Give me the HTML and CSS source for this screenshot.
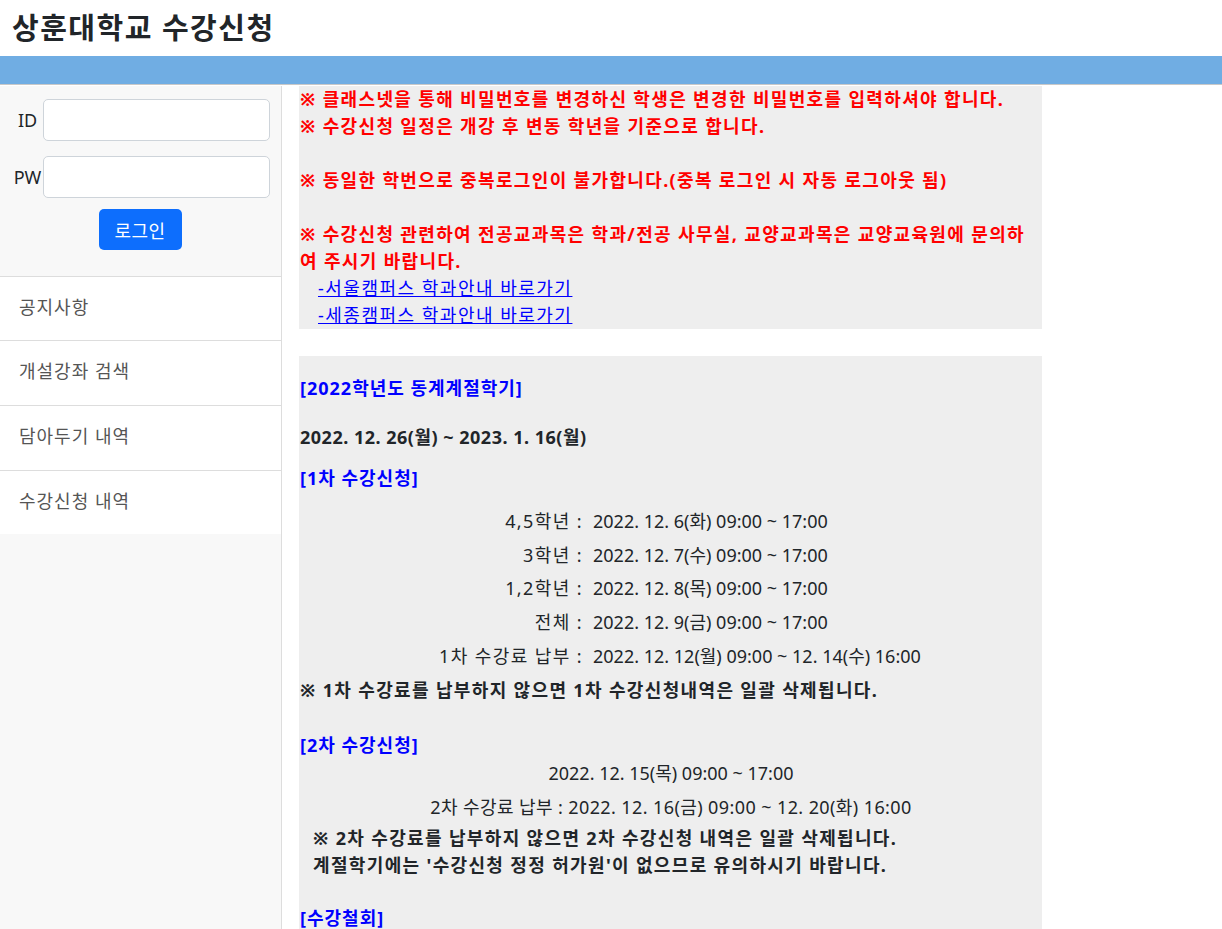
FILE: index.html
```html
<!DOCTYPE html>
<html lang="ko">
<head>
<meta charset="utf-8">
<title>상훈대학교 수강신청</title>
<link rel="stylesheet" href="styles.css">
</head>
<body>
<header class="top">
  <h1 class="title">상훈대학교 수강신청</h1>
</header>
<div class="bar"></div>
<div class="layout">
  <aside class="side">
    <form class="login">
      <div class="field"><label class="lbl" for="uid">ID</label><input class="inp" id="uid" type="text"></div>
      <div class="field"><label class="lbl" for="upw">PW</label><input class="inp" id="upw" type="password"></div>
      <button class="btn" type="button">로그인</button>
    </form>
    <nav class="menu">
      <a class="item" href="#">공지사항</a>
      <a class="item" href="#">개설강좌 검색</a>
      <a class="item" href="#">담아두기 내역</a>
      <a class="item" href="#">수강신청 내역</a>
    </nav>
  </aside>
  <main class="main">
    <section class="box notice">
      <div class="red">※ 클래스넷을 통해 비밀번호를 변경하신 학생은 변경한 비밀번호를 입력하셔야 합니다.</div>
      <div class="red">※ 수강신청 일정은 개강 후 변동 학년을 기준으로 합니다.</div>
      <div class="blank"></div>
      <div class="red">※ 동일한 학번으로 중복로그인이 불가합니다.(중복 로그인 시 자동 로그아웃 됨)</div>
      <div class="blank"></div>
      <div class="red">※ 수강신청 관련하여 전공교과목은 학과/전공 사무실, 교양교과목은 교양교육원에 문의하<br>여 주시기 바랍니다.</div>
      <a class="link" href="#">-서울캠퍼스 학과안내 바로가기</a>
      <a class="link" href="#">-세종캠퍼스 학과안내 바로가기</a>
    </section>
    <section class="box sched">
      <div class="head h-term">[2022학년도 동계계절학기]</div>
      <div class="strong period">2022. 12. 26(월) ~ 2023. 1. 16(월)</div>
      <div class="head h-first">[1차 수강신청]</div>
      <div class="table">
        <div class="k">4,5학년 :</div><div class="v">2022. 12. 6(화) 09:00 ~ 17:00</div>
        <div class="k">3학년 :</div><div class="v">2022. 12. 7(수) 09:00 ~ 17:00</div>
        <div class="k">1,2학년 :</div><div class="v">2022. 12. 8(목) 09:00 ~ 17:00</div>
        <div class="k">전체 :</div><div class="v">2022. 12. 9(금) 09:00 ~ 17:00</div>
        <div class="k">1차 수강료 납부 :</div><div class="v">2022. 12. 12(월) 09:00 ~ 12. 14(수) 16:00</div>
      </div>
      <div class="strong note warn1">※ 1차 수강료를 납부하지 않으면 1차 수강신청내역은 일괄 삭제됩니다.</div>
      <div class="head h-second">[2차 수강신청]</div>
      <div class="center c1">2022. 12. 15(목) 09:00 ~ 17:00</div>
      <div class="center c2">2차 수강료 납부 : 2022. 12. 16(금) 09:00 ~ 12. 20(화) 16:00</div>
      <div class="strong note indent warn2">※ 2차 수강료를 납부하지 않으면 2차 수강신청 내역은 일괄 삭제됩니다.</div>
      <div class="strong note indent">계절학기에는 '수강신청 정정 허가원'이 없으므로 유의하시기 바랍니다.</div>
      <div class="head h-cancel">[수강철회]</div>
      <div class="pad"></div>
    </section>
  </main>
</div>
</body>
</html>
```

FILE: styles.css
```css
html, body {
  margin: 0;
  padding: 0;
  background: #fff;
}
body {
  font-family: "Noto Sans", "Noto Sans CJK KR", sans-serif;
  color: #212529;
  font-size: 18px;
}
.top {
  height: 56px;
  display: flex;
  align-items: center;
  padding-left: 12px;
  box-sizing: border-box;
}
.title {
  margin: 0;
  font-size: 29px;
  letter-spacing: 1.5px;
  font-weight: 700;
  line-height: 1;
  color: #212529;
  position: relative;
  top: -1px;
}
.bar {
  height: 28px;
  background: #70ade3;
  border-bottom: 1px solid #c8c8c8;
  margin-bottom: 1px;
}
.layout {
  display: flex;
  min-height: 843px;
}
.side {
  width: 281px;
  flex: none;
  background: #f8f8f8;
  border-right: 1px solid #ddd;
}
.login {
  padding: 13px 11px 26px 12px;
  display: flex;
  flex-direction: column;
  margin: 0;
}
.field {
  display: flex;
  align-items: center;
  margin-bottom: 15px;
}
.field:nth-child(2) {
  margin-bottom: 11px;
}
.lbl {
  width: 31px;
  text-align: center;
  font-size: 18px;
  color: #212529;
}
.inp {
  width: 227px;
  height: 42px;
  box-sizing: border-box;
  border: 1px solid #ced4da;
  border-radius: 5px;
  background: #fff;
  padding: 6px 12px;
  font-size: 16px;
  outline: none;
}
.btn {
  align-self: center;
  position: relative;
  left: -1px;
  width: 83px;
  height: 41px;
  background: #0d6efd;
  color: #fff;
  border: none;
  border-radius: 5px;
  font-family: "Noto Sans CJK KR", sans-serif;
  font-size: 18px;
  letter-spacing: 0.5px;
  padding: 0;
}
.menu {
  display: flex;
  flex-direction: column;
}
.item {
  display: flex;
  align-items: center;
  height: 64px;
  box-sizing: border-box;
  border-top: 1px solid #ddd;
  background: #fff;
  padding-left: 19px;
  padding-bottom: 6px;
  color: #555;
  text-decoration: none;
  font-size: 18px;
  letter-spacing: 1px;
}
.item:nth-child(2), .item:nth-child(3) {
  height: 65px;
}
.main {
  padding-left: 17px;
  width: 743px;
}
.box {
  background: #eee;
  padding-left: 1px;
  line-height: 27px;
}
.notice {
  display: flex;
  flex-direction: column;
}
.red {
  color: #f00;
  font-weight: 700;
  letter-spacing: 1.35px;
}
.blank {
  height: 27px;
}
.link {
  color: #00f;
  text-decoration: underline;
  margin-left: 18px;
  align-self: flex-start;
  letter-spacing: 1.5px;
}
.sched {
  margin-top: 27px;
  padding-top: 19px;
}
.head {
  color: #00f;
  font-weight: 700;
  letter-spacing: 1px;
}
.strong {
  font-weight: 700;
}
.period {
  margin-top: 22px;
  letter-spacing: 0.5px;
}
.note {
  letter-spacing: 1.35px;
}
.h-first {
  margin-top: 14px;
}
.table {
  display: grid;
  grid-template-columns: 283px auto;
  column-gap: 10px;
  margin-top: 13px;
}
.k, .v {
  line-height: 33.7px;
}
.k {
  text-align: right;
  letter-spacing: 1.4px;
}
.warn1 {
  margin-top: 3px;
}
.h-second {
  margin-top: 28px;
}
.center {
  text-align: center;
}
.c1 {
  margin-top: 1px;
}
.c2 {
  margin-top: 7px;
  letter-spacing: 0.4px;
}
.warn2 {
  margin-top: 4px;
}
.indent {
  padding-left: 13px;
}
.h-cancel {
  margin-top: 26px;
}
.pad {
  height: 60px;
}
```
